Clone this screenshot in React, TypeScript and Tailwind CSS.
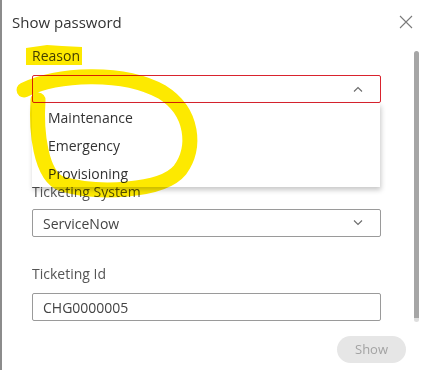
import React from 'react'

function Chevron({ up }: { up?: boolean }) {
  return (
    <svg width="10" height="6" viewBox="0 0 10 6" className="shrink-0">
      <path d={up ? 'M1 5.5 L5 1.5 L9 5.5' : 'M1 0.5 L5 4.5 L9 0.5'} fill="none" stroke="#6b6b6b" strokeWidth="1.1" />
    </svg>
  )
}

const reasons = ['Maintenance', 'Emergency', 'Provisioning']

export default function App() {
  return (
    <div className="relative h-[370px] w-[422px] overflow-hidden border-l-2 border-[#8c8c8c] bg-white font-['Open_Sans',sans-serif] text-[#333]">
      <div className="flex h-[44px] items-center justify-between pl-[10px] pr-[9px]">
        <div className="text-[15px] leading-[20px] text-[#333]">Show password</div>
        <svg width="14" height="14" viewBox="0 0 14 14">
          <path d="M1 1 L13 13 M13 1 L1 13" stroke="#7a7a7a" strokeWidth="1.1" fill="none" />
        </svg>
      </div>

      <div className="flex">
        <div className="w-[379px] pl-[30px]">
          <div className="mt-[2px] text-[14px] leading-[20px] text-[#444]">Reason</div>

          <div className="relative mt-[9px]">
            <div className="flex h-[28px] w-[349px] items-center justify-end rounded-[2px] border border-[#d9232e] pr-[17px]">
              <Chevron up />
            </div>
            <div className="absolute left-0 top-[28px] z-10 flex w-[348px] flex-col bg-white shadow-[1px_3px_5px_rgba(0,0,0,0.22)]">
              {reasons.map(r => (
                <div key={r} className="flex h-[28px] items-center pl-[16px] text-[14px] text-[#333]">
                  {r}
                </div>
              ))}
            </div>
          </div>

          <div className="mt-[79px] text-[14px] leading-[20px] text-[#555]">Ticketing System</div>
          <div className="mt-[7px] flex h-[28px] w-[349px] items-center justify-between rounded-[2px] border border-[#9a9a9a] pl-[10px] pr-[17px]">
            <span className="text-[14px] text-[#444]">ServiceNow</span>
            <Chevron />
          </div>

          <div className="mt-[27px] text-[14px] leading-[20px] text-[#555]">Ticketing Id</div>
          <div className="mt-[9px] flex h-[28px] w-[349px] items-center rounded-[2px] border border-[#9a9a9a] pl-[10px]">
            <span className="text-[14px] text-[#444]">CHG0000005</span>
          </div>

          <div className="mt-[15px] flex justify-end">
            <div className="mr-[-25px] flex h-[27px] w-[69px] items-center justify-center rounded-full bg-[#e6e6e6] text-[13px] text-[#a3a3a3]">
              Show
            </div>
          </div>
        </div>

        <div className="ml-[33px] mt-[7px] flex h-[271px] w-[5px] flex-col overflow-hidden rounded-full">
          <div className="h-[267px] bg-[#a6a6a6]" />
          <div className="flex-1 bg-[#dedede]" />
        </div>
      </div>

      <svg className="pointer-events-none absolute left-0 top-0 z-20 mix-blend-multiply" width="422" height="370">
        <path d="M24 48 L45 45 L60 46 L80 47 L80 65 L24 65 Z" fill="#fde900" />
        <path
          d="M22 90 C 55 74, 120 70, 160 92 C 192 112, 194 148, 178 170 C 160 192, 95 194, 60 184 C 38 176, 34 130, 36 100"
          fill="none"
          stroke="#fde900"
          strokeWidth="15"
          strokeLinecap="round"
        />
      </svg>
    </div>
  )
}
